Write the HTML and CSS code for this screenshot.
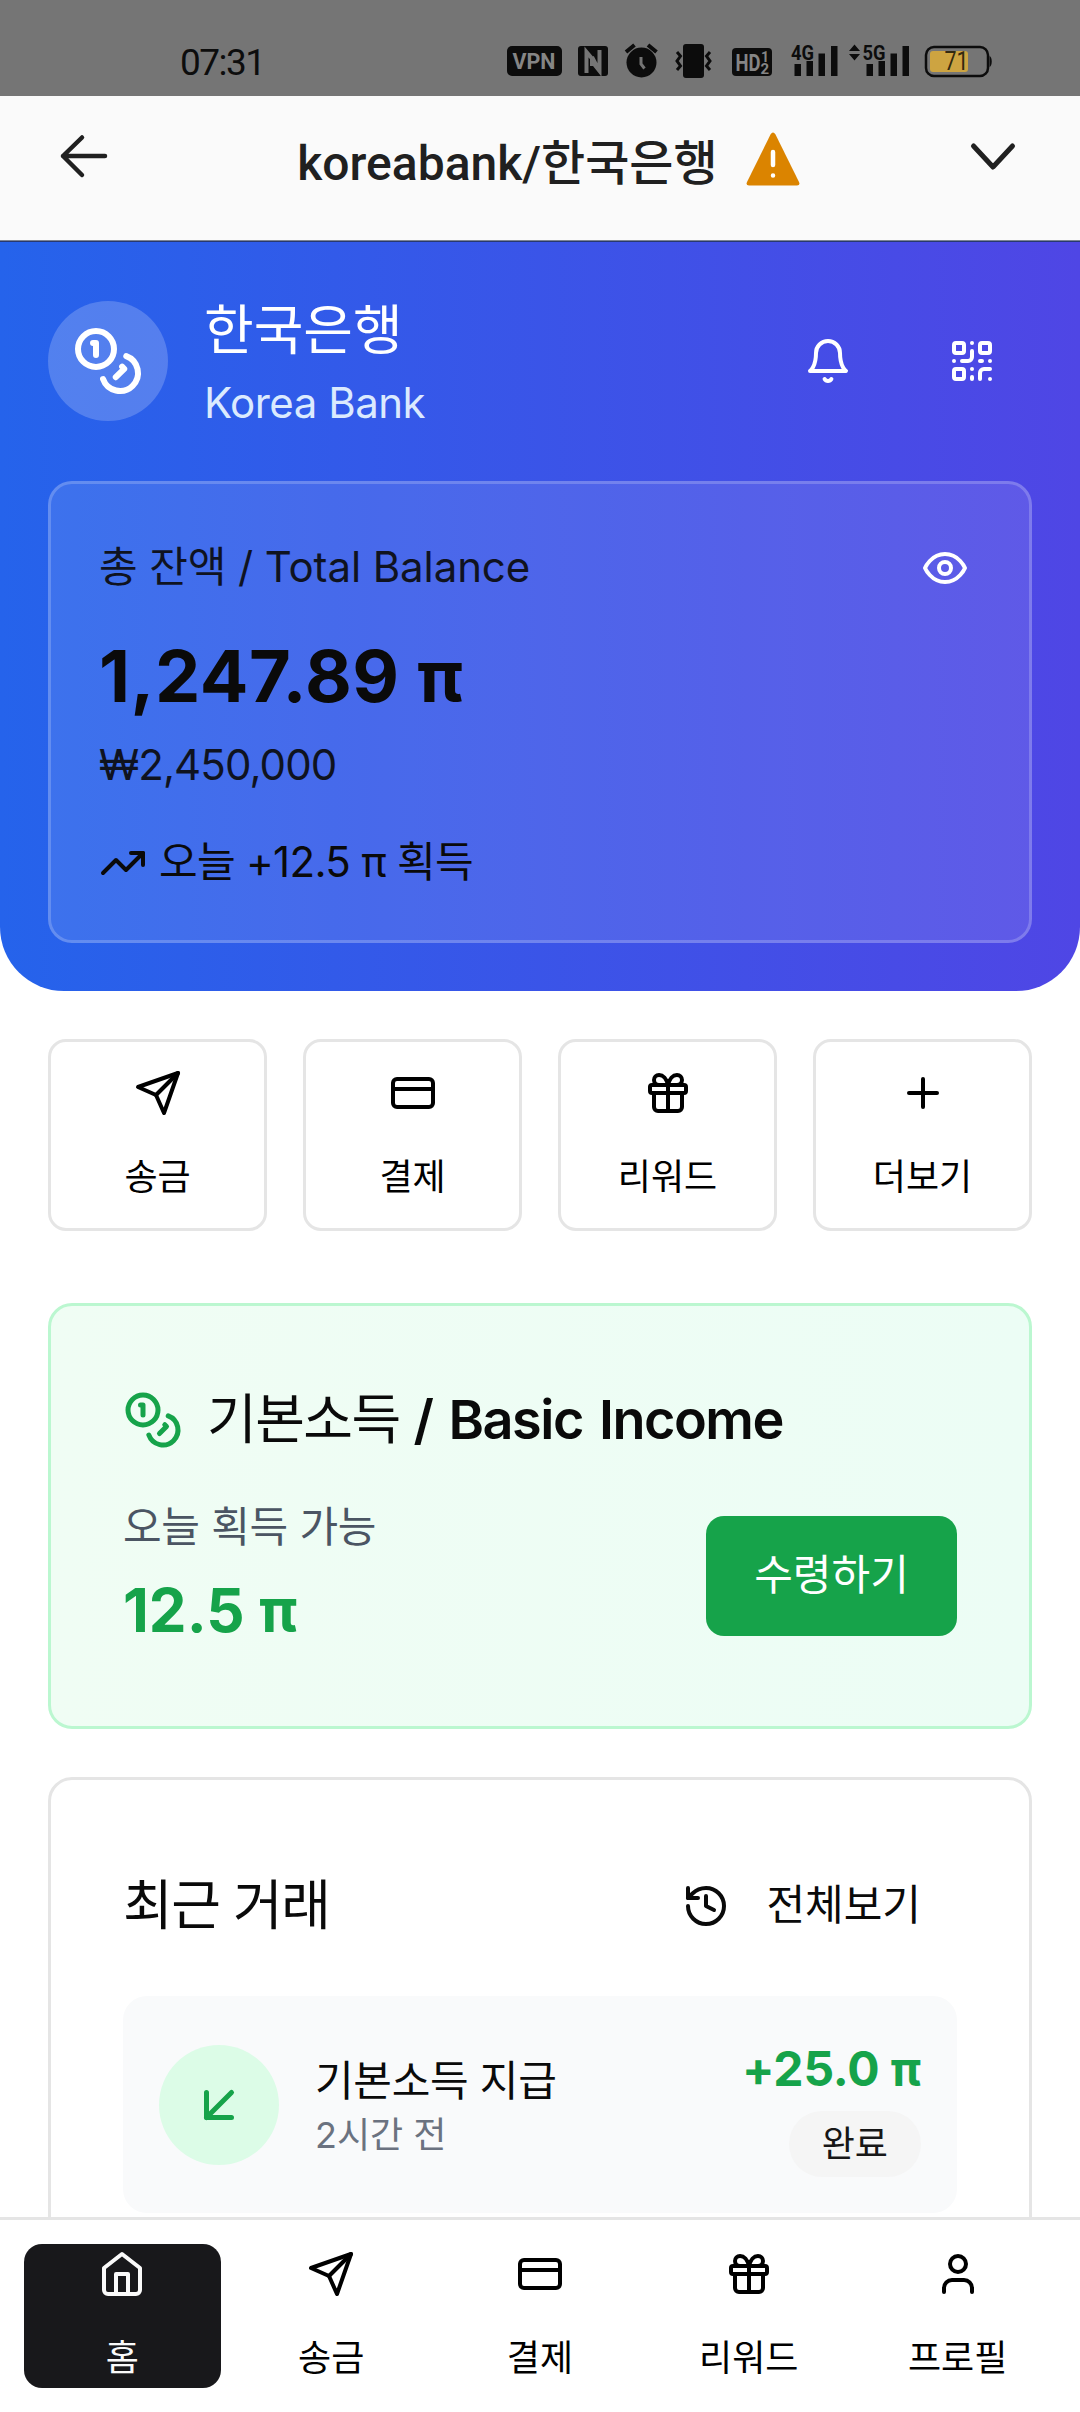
FILE: index.html
```html
<!DOCTYPE html>
<html lang="ko">
<head>
<meta charset="utf-8">
<meta name="viewport" content="width=device-width, initial-scale=1">
<title>koreabank/한국은행</title>
<link rel="stylesheet" href="styles.css">
</head>
<body>
<svg class="sprite" aria-hidden="true">
  <symbol id="coins" viewBox="0 0 24 24"><circle cx="8" cy="8" r="6"/><path d="M18.09 10.37A6 6 0 1 1 10.34 18"/><path d="M7 6h1v4"/><path d="m16.71 13.88.7.71-2.82 2.82"/></symbol>
  <symbol id="bell" viewBox="0 0 24 24"><path d="M6 8a6 6 0 0 1 12 0c0 7 3 9 3 9H3s3-2 3-9"/><path d="M10.3 21a1.94 1.94 0 0 0 3.4 0"/></symbol>
  <symbol id="qr" viewBox="0 0 24 24"><rect width="5" height="5" x="3" y="3" rx="1"/><rect width="5" height="5" x="16" y="3" rx="1"/><rect width="5" height="5" x="3" y="16" rx="1"/><path d="M21 16h-3a2 2 0 0 0-2 2v3"/><path d="M21 21v.01"/><path d="M12 7v3a2 2 0 0 1-2 2H7"/><path d="M3 12h.01"/><path d="M12 3h.01"/><path d="M12 16v.01"/><path d="M16 12h1"/><path d="M21 12v.01"/><path d="M12 21v-1"/></symbol>
  <symbol id="eye" viewBox="0 0 24 24"><path d="M2 12s3-7 10-7 10 7 10 7-3 7-10 7-10-7-10-7Z"/><circle cx="12" cy="12" r="3"/></symbol>
  <symbol id="trend" viewBox="0 0 24 24"><path d="M22 7 13.5 15.5 8.5 10.5 2 17"/><path d="M16 7h6v6"/></symbol>
  <symbol id="send" viewBox="0 0 24 24"><path d="m22 2-7 20-4-9-9-4Z"/><path d="M22 2 11 13"/></symbol>
  <symbol id="card" viewBox="0 0 24 24"><rect width="20" height="14" x="2" y="5" rx="2"/><path d="M2 10h20"/></symbol>
  <symbol id="gift" viewBox="0 0 24 24"><rect x="3" y="8" width="18" height="4" rx="1"/><path d="M12 8v13"/><path d="M19 12v7a2 2 0 0 1-2 2H7a2 2 0 0 1-2-2v-7"/><path d="M7.5 8a2.5 2.5 0 0 1 0-5A4.8 8 0 0 1 12 8a4.8 8 0 0 1 4.5-5 2.5 2.5 0 0 1 0 5"/></symbol>
  <symbol id="plus" viewBox="0 0 24 24"><path d="M5 12h14"/><path d="M12 5v14"/></symbol>
  <symbol id="history" viewBox="0 0 24 24"><path d="M3 12a9 9 0 1 0 9-9 9.75 9.75 0 0 0-6.74 2.74L3 8"/><path d="M3 3v5h5"/><path d="M12 7v5l4 2"/></symbol>
  <symbol id="arrow-in" viewBox="0 0 24 24"><path d="M17 7 7 17"/><path d="M17 17H7V7"/></symbol>
  <symbol id="home" viewBox="0 0 24 24"><path d="m3 9 9-7 9 7v11a2 2 0 0 1-2 2H5a2 2 0 0 1-2-2z"/><path d="M9 22V12h6v10"/></symbol>
  <symbol id="user" viewBox="0 0 24 24"><path d="M19 21v-2a4 4 0 0 0-4-4H9a4 4 0 0 0-4 4v2"/><circle cx="12" cy="7" r="4"/></symbol>
</svg>

<div class="screen">
  <div class="statusbar">
    <span class="clock">07:31</span>
    <svg class="status-icons" width="490" height="56" viewBox="506 30 490 56">
      <rect x="507" y="46" width="55" height="30" rx="5"/>
      <text class="knock" x="512.5" y="69" font-size="22" font-weight="700" textLength="43" lengthAdjust="spacingAndGlyphs">VPN</text>
      <rect x="578" y="46" width="30" height="30" rx="3"/>
      <path class="knock-line" d="M586.5 73V52L592 58.500V66M592 57L598.500 69.500M599.500 50V71L594 64"/>
      <circle cx="641.500" cy="62.500" r="15"/>
      <path class="dark-line" d="M626 52l8.500-7M656.500 52l-8.500-7"/>
      <path class="knock-line thin" d="M641 57v7l3.500 4.500"/>
      <rect x="683" y="44" width="21" height="34" rx="3"/>
      <path class="dark-line thin" d="M677 52l3.500 4-3.500 5 3.500 5-3.500 4M710 52l-3.500 4 3.500 5-3.500 5 3.500 4"/>
      <rect x="732" y="48" width="40" height="28" rx="4"/>
      <text class="knock" x="735.5" y="71" font-size="24" font-weight="700" textLength="25" lengthAdjust="spacingAndGlyphs">HD</text>
      <text class="knock" x="761" y="61.500" font-size="14" font-weight="700">1</text>
      <text class="knock" x="760.500" y="73.500" font-size="15" font-weight="700">2</text>
      <text x="791" y="59.500" font-size="21" font-weight="700" textLength="23" lengthAdjust="spacingAndGlyphs">4G</text>
      <path d="M794.500 64h6.500v12h-6.500zM806.500 61h6.500v15h-6.500zM818.500 53.500h6.500v22.500h-6.500zM831 46h6.500v30h-6.500z"/>
      <path d="M849 51l5.500-6.500 5.500 6.500zM849 54l5.500 6.500 5.500-6.500z"/>
      <text x="862.500" y="59.500" font-size="21" font-weight="700" textLength="23" lengthAdjust="spacingAndGlyphs">5G</text>
      <path d="M866.500 64h6.500v12h-6.500zM878.500 61h6.500v15h-6.500zM890.500 53.500h6.500v22.500h-6.500zM902.500 46h6.500v30h-6.500z"/>
      <rect class="battery" x="926" y="47" width="62" height="29" rx="8"/>
      <rect class="charge" x="930" y="51" width="38" height="21" rx="3"/>
      <path d="M989.500 56c3 1 3 10 0 11z"/>
      <text class="level" x="944.500" y="70" font-size="25" textLength="24" lengthAdjust="spacingAndGlyphs">71</text>
    </svg>
  </div>

  <header class="titlebar">
    <svg class="back" width="54" height="48" viewBox="0 0 54 48"><path d="M7 24h42M26 5.500 7 24l19 19"/></svg>
    <div class="page-title">
      <h1>koreabank/한국은행</h1>
      <svg class="warn" width="54" height="54" viewBox="0 0 54 54"><path d="M24.500 2.500q2.500-4 5 0L53 50q1.500 3.500-2 3.500H3q-3.500 0-2-3.500z"/><path class="mark" d="M27 20v13M27 43.500v.1"/></svg>
    </div>
    <svg class="chevron" width="48" height="30" viewBox="0 0 48 30"><path d="M4.500 5 24 26 43.500 5"/></svg>
  </header>

  <main class="content">
    <section class="hero">
      <div class="hero-top">
        <div class="brand">
          <span class="logo"><svg class="icon i72"><use href="#coins"/></svg></span>
          <div>
            <div class="brand-ko">한국은행</div>
            <div class="brand-en">Korea Bank</div>
          </div>
        </div>
        <div class="hero-actions">
          <button class="icon-btn" aria-label="알림"><svg class="icon"><use href="#bell"/></svg></button>
          <button class="icon-btn" aria-label="QR"><svg class="icon"><use href="#qr"/></svg></button>
        </div>
      </div>
      <div class="balance">
        <div class="balance-head">
          <span class="soft">총 잔액 / Total Balance</span>
          <button class="eye-btn" aria-label="잔액 표시"><svg class="icon"><use href="#eye"/></svg></button>
        </div>
        <div class="amount">1,247.89 π</div>
        <div class="won soft">₩2,450,000</div>
        <div class="earned"><svg class="icon"><use href="#trend"/></svg><span>오늘 +12.5 π 획득</span></div>
      </div>
    </section>

    <section class="quick">
      <button class="tile"><svg class="icon"><use href="#send"/></svg><span>송금</span></button>
      <button class="tile"><svg class="icon"><use href="#card"/></svg><span>결제</span></button>
      <button class="tile"><svg class="icon"><use href="#gift"/></svg><span>리워드</span></button>
      <button class="tile"><svg class="icon"><use href="#plus"/></svg><span>더보기</span></button>
    </section>

    <section class="panel income">
      <h2 class="panel-title"><svg class="icon i60 green"><use href="#coins"/></svg><span>기본소득 <b>/ Basic Income</b></span></h2>
      <div class="income-row">
        <div>
          <div class="income-label">오늘 획득 가능</div>
          <div class="income-value">12.5 π</div>
        </div>
        <button class="claim">수령하기</button>
      </div>
    </section>

    <section class="panel recent">
      <div class="recent-head">
        <h2 class="panel-title">최근 거래</h2>
        <button class="view-all"><svg class="icon"><use href="#history"/></svg><span>전체보기</span></button>
      </div>
      <div class="tx">
        <span class="tx-icon"><svg class="icon i60"><use href="#arrow-in"/></svg></span>
        <div class="tx-text">
          <div class="tx-name">기본소득 지급</div>
          <div class="tx-time">2시간 전</div>
        </div>
        <div class="tx-side">
          <div class="tx-amount">+25.0 π</div>
          <span class="badge">완료</span>
        </div>
      </div>
    </section>
  </main>

  <nav class="tabs">
    <button class="tab active"><svg class="icon"><use href="#home"/></svg><span>홈</span></button>
    <button class="tab"><svg class="icon"><use href="#send"/></svg><span>송금</span></button>
    <button class="tab"><svg class="icon"><use href="#card"/></svg><span>결제</span></button>
    <button class="tab"><svg class="icon"><use href="#gift"/></svg><span>리워드</span></button>
    <button class="tab"><svg class="icon"><use href="#user"/></svg><span>프로필</span></button>
  </nav>
</div>
</body>
</html>
```

FILE: styles.css
```css
* { box-sizing: border-box; margin: 0; padding: 0; }

html, body { height: 2412px; overflow: hidden; }

body {
  background: #fff;
  color: #0a0a0a;
  font-family: Inter, "Noto Sans CJK KR", sans-serif;
  font-size: 42px;
  line-height: 60px;
  white-space: nowrap;
}

button { font: inherit; color: inherit; background: none; border: 0; }

.sprite { display: none; }

.icon {
  display: block;
  flex: none;
  width: 48px;
  height: 48px;
  fill: none;
  stroke: currentColor;
  stroke-width: 2;
  stroke-linecap: round;
  stroke-linejoin: round;
}
.i60 { width: 60px; height: 60px; }
.i72 { width: 72px; height: 72px; }
.green { color: #16a34a; }

.screen {
  display: flex;
  flex-direction: column;
  width: 1080px;
  height: 2412px;
  overflow: hidden;
}

/* Phone status bar */
.statusbar {
  flex: none;
  display: flex;
  justify-content: space-between;
  align-items: flex-start;
  height: 96px;
  padding: 30px 84px 0 180px;
  background: #757575;
  font-family: Roboto, sans-serif;
}
.clock { padding-top: 13px; font-size: 37px; line-height: 39px; letter-spacing: -1.500px; color: #0d0d0d; }
.status-icons { display: block; fill: #0c0c0c; }
.status-icons .knock { fill: #858585; }
.status-icons .knock-line { fill: none; stroke: #757575; stroke-width: 4; }
.status-icons .dark-line { fill: none; stroke: #0c0c0c; stroke-width: 4; }
.status-icons .thin { stroke-width: 3; }
.status-icons .battery { fill: none; stroke: #0c0c0c; stroke-width: 2.500; }
.status-icons .charge { fill: #cda441; }
.status-icons .level { fill: #33290f; }

/* App title bar */
.titlebar {
  position: relative;
  z-index: 1;
  flex: none;
  display: flex;
  justify-content: space-between;
  align-items: flex-start;
  height: 145px;
  padding: 36px 63px 0 56px;
  background: #fafafa;
  border-bottom: 1px solid #7d8494;
  box-shadow: 0 1px 0 #28396f;
  color: #202020;
}
.back, .chevron { fill: none; stroke: #202020; stroke-width: 4.500; stroke-linecap: round; stroke-linejoin: round; }
.chevron { margin-top: 9px; stroke-width: 5; }
.page-title { display: flex; gap: 28px; padding-left: 18px; }
.page-title h1 {
  padding-top: 2px;
  font: 500 48px/60px Roboto, "Noto Sans CJK KR", sans-serif;
}
.warn { fill: #db8400; }
.warn .mark { fill: none; stroke: #fff; stroke-width: 4.500; stroke-linecap: round; }

.content { flex: 1; min-height: 0; overflow: hidden; }

/* Hero with the balance card */
.hero {
  padding: 48px;
  border-radius: 0 0 64px 64px;
  background: linear-gradient(to right, #2563eb, #4f46e5);
  color: #fff;
}
.hero-top { display: flex; justify-content: space-between; align-items: center; margin-bottom: 48px; }
.brand { display: flex; align-items: center; gap: 36px; }
.logo {
  display: grid;
  place-items: center;
  width: 120px;
  height: 120px;
  border-radius: 50%;
  background: rgba(255, 255, 255, .2);
}
.brand-ko { font-size: 54px; line-height: 84px; }
.brand-en { color: #dbeafe; letter-spacing: -.500px; }
.hero-actions { display: flex; gap: 24px; }
.icon-btn { display: grid; place-items: center; width: 120px; height: 120px; }

.balance {
  padding: 48px;
  height: 462px;
  border: 3px solid rgba(255, 255, 255, .2);
  border-radius: 24px;
  background: rgba(255, 255, 255, .1);
  color: #0a0a0a;
}
.balance-head { display: flex; justify-content: space-between; align-items: center; height: 72px; margin-bottom: 24px; }
.balance-head .soft { padding-bottom: 2px; letter-spacing: -.100px; }
.soft { opacity: .9; }
.eye-btn { display: grid; place-items: center; width: 72px; height: 72px; color: #fff; }
.amount { font-size: 72px; line-height: 95px; font-weight: 700; letter-spacing: .500px; }
.won { margin-top: 12px; letter-spacing: -.900px; }
.earned { display: flex; align-items: center; gap: 12px; margin-top: 37px; }
.earned span { padding-bottom: 2px; letter-spacing: -.700px; }

/* Shortcut tiles */
.quick { display: grid; grid-template-columns: repeat(4, 1fr); gap: 36px; padding: 48px 48px 72px; }
.tile, .tab {
  display: flex;
  flex-direction: column;
  align-items: center;
  justify-content: center;
  gap: 36px;
  border-radius: 18px;
  font-size: 36px;
  line-height: 48px;
}
.tile { height: 192px; border: 3px solid #e5e5e5; }
.tile, .tab:not(.active) { color: #000; }

/* Cards */
.panel { margin: 0 48px 48px; padding: 72px; border: 3px solid #e5e5e5; border-radius: 24px; }
.panel-title {
  display: flex;
  align-items: center;
  gap: 24px;
  font-size: 54px;
  line-height: 84px;
  font-weight: 400;
  letter-spacing: -1.500px;
}
.panel-title b { font-weight: 600; word-spacing: 4px; }

.income { border-color: #bbf7d0; background: linear-gradient(to right, #f0fdf4, #ecfdf5); }
.income-row { display: flex; justify-content: space-between; align-items: center; margin-top: 36px; }
.income-label { color: #4b5563; line-height: 58px; letter-spacing: -.300px; }
.income-value { margin-top: 12px; font-size: 60px; line-height: 84px; padding-bottom: 2px; font-weight: 700; color: #16a34a; }
.claim { width: 251px; height: 120px; padding-bottom: 2px; border-radius: 18px; background: #16a34a; color: #fff; }

.recent-head { display: flex; justify-content: space-between; align-items: center; height: 108px; margin-bottom: 36px; }
.view-all { display: flex; align-items: center; gap: 36px; padding: 0 36px; }
.view-all span { padding-bottom: 2px; }

.tx {
  display: flex;
  align-items: center;
  height: 217px;
  padding: 36px;
  border-radius: 24px;
  background: #f9fafb;
}
.tx-icon {
  display: grid;
  place-items: center;
  width: 120px;
  height: 120px;
  margin-right: 36px;
  border-radius: 50%;
  background: #dcfce7;
  color: #16a34a;
}
.tx-name { letter-spacing: -.300px; }
.tx-time { font-size: 36px; line-height: 48px; color: #6b7280; }
.tx-side { display: flex; flex-direction: column; align-items: flex-end; gap: 6px; margin-left: auto; }
.tx-amount { font-size: 48px; line-height: 72px; font-weight: 700; letter-spacing: -.200px; color: #16a34a; }
.badge {
  padding: 9px 33px;
  border-radius: 33px;
  background: #f5f5f5;
  font-size: 36px;
  line-height: 48px;
  color: #171717;
}

/* Bottom navigation */
.tabs {
  flex: none;
  display: grid;
  grid-template-columns: repeat(5, 1fr);
  gap: 12px;
  height: 195px;
  padding: 24px;
  border-top: 3px solid #e5e5e5;
  background: #fff;
}
.tab.active { background: #18181b; color: #fafafa; }
```
